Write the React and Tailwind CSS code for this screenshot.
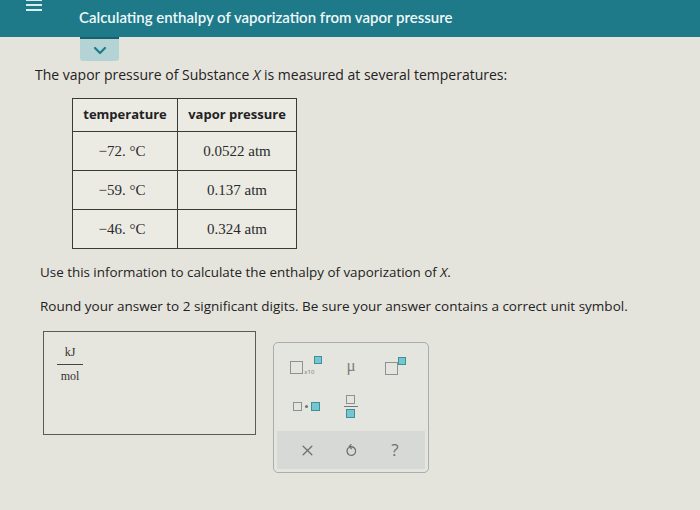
import React from "react";

const sans = { fontFamily: '"Open Sans", "DejaVu Sans", sans-serif' };
const serif = { fontFamily: '"Liberation Serif", "Times New Roman", serif' };

function TealBox({ className = "" }) {
  return <span className={"inline-block border border-[#3f8f9a] bg-[#74c7cf] " + className} />;
}
function GrayBox({ className = "" }) {
  return <span className={"inline-block border border-[#8c9292] bg-transparent " + className} />;
}

export default function App() {
  const rows = [
    ["\u221272. \u00b0C", "0.0522 atm"],
    ["\u221259. \u00b0C", "0.137 atm"],
    ["\u221246. \u00b0C", "0.324 atm"],
  ];
  return (
    <div className="w-[700px] h-[510px] overflow-hidden bg-[#e5e4dc] text-[#222]" style={sans}>
      {/* header */}
      <div className="h-[37px] bg-[#1e7a89] flex items-start relative">
        <div className="ml-[26px] mt-[-1px] flex flex-col gap-[3px] w-[16px]">
          <span className="block h-[2px] bg-[#d9eef0]" />
          <span className="block h-[2px] bg-[#d9eef0]" />
          <span className="block h-[2px] bg-[#d9eef0]" />
        </div>
        <div className="ml-[37px] mt-[6px] text-[15px] font-semibold text-[#eef8f9]" style={{ fontFamily: 'Lato, "Open Sans", sans-serif' }}>
          Calculating enthalpy of vaporization from vapor pressure
        </div>
      </div>
      {/* tab */}
      <div className="ml-[80px] w-[39px] h-[24px] bg-[#b4d3d4] border-t-[2px] border-[#18606b] rounded-b-[3px] flex items-center justify-center">
        <svg width="14" height="9" viewBox="0 0 14 9">
          <path d="M2 2 L7 7 L12 2" fill="none" stroke="#1f7c8b" strokeWidth="2.2" strokeLinecap="round" strokeLinejoin="round" />
        </svg>
      </div>
      <p className="ml-[35px] mt-[4px] text-[14px] leading-[19px] text-[#222]">
        The vapor pressure of Substance <i>X</i> is measured at several temperatures:
      </p>
      {/* table */}
      <table className="ml-[72px] mt-[14px] border-collapse border-[1.5px] border-[#3a3a3a] bg-[#ebebe4]">
        <thead>
          <tr className="h-[33px]">
            <th className="w-[105px] border border-[#3a3a3a] text-[13px] font-bold text-[#222] px-1">temperature</th>
            <th className="w-[119px] border border-[#3a3a3a] text-[13px] font-bold text-[#222] px-1">vapor pressure</th>
          </tr>
        </thead>
        <tbody>
          {rows.map((r, i) => (
            <tr key={i} className="h-[39px]">
              <td className="border border-[#3a3a3a] text-center text-[15px] text-[#2a2a2a] pr-[6px]" style={serif}>{r[0]}</td>
              <td className="border border-[#3a3a3a] text-center text-[15px] text-[#2a2a2a]" style={serif}>{r[1]}</td>
            </tr>
          ))}
        </tbody>
      </table>
      <p className="ml-[40px] mt-[14px] text-[13.4px] leading-[18px]">
        Use this information to calculate the enthalpy of vaporization of <i>X</i>.
      </p>
      <p className="ml-[40px] mt-[16px] text-[13.5px] leading-[18px]">
        Round your answer to 2 significant digits. Be sure your answer contains a correct unit symbol.
      </p>
      {/* answer area */}
      <div className="flex items-start mt-[16px]">
        <div className="ml-[43px] w-[213px] h-[104px] border border-[#5a5a5a] bg-[#e7e6de] pl-[13px] pt-[6px]">
          <div className="inline-flex flex-col items-center text-[12px] text-[#333] leading-[13px]" style={serif}>
            <span className="px-[2px]">kJ</span>
            <span className="block w-[26px] h-px bg-[#444] my-[5px]" />
            <span>mol</span>
          </div>
        </div>
        <div className="ml-[17px] mt-[11px] w-[156px] h-[131px] border border-[#a9adab] rounded-[5px] bg-[#e4e5de] flex flex-col overflow-hidden">
          <div className="grid grid-cols-3 h-[42px] items-center px-[10px] pt-[4px]">
            <div className="flex items-start justify-center">
              <GrayBox className="w-[13px] h-[13px] mt-[5px]" />
              <span className="text-[6px] text-[#777] mt-[12px] ml-[1px]">x10</span>
              <TealBox className="w-[8px] h-[8px]" />
            </div>
            <div className="flex justify-center text-[17px] text-[#7c8080]" style={serif}>μ</div>
            <div className="flex items-start justify-center">
              <GrayBox className="w-[13px] h-[13px] mt-[5px]" />
              <TealBox className="w-[8px] h-[8px]" />
            </div>
          </div>
          <div className="grid grid-cols-3 h-[42px] items-center px-[10px]">
            <div className="flex items-center justify-center gap-[3px]">
              <GrayBox className="w-[9px] h-[9px]" />
              <span className="w-[3px] h-[3px] rounded-full bg-[#6e7474]" />
              <TealBox className="w-[9px] h-[9px]" />
            </div>
            <div className="flex flex-col items-center justify-center">
              <GrayBox className="w-[9px] h-[9px]" />
              <span className="block w-[14px] h-px bg-[#777] my-[2px]" />
              <TealBox className="w-[9px] h-[9px]" />
            </div>
            <div />
          </div>
          <div className="mt-auto mx-[3px] mb-[3px] h-[38px] bg-[#d6d9d5] grid grid-cols-3 items-center px-[8px] text-[#6b7474]">
            <div className="flex justify-center">
              <svg width="13" height="13" viewBox="0 0 12 12">
                <path d="M2 2 L10 10 M10 2 L2 10" stroke="#6b7474" strokeWidth="1.2" strokeLinecap="round" />
              </svg>
            </div>
            <div className="flex justify-center">
              <svg width="13" height="14" viewBox="0 0 12 13">
                <path d="M3.2 4.5 A4 4 0 1 0 6 3.5 L4.5 3.5" fill="none" stroke="#6b7474" strokeWidth="1.2" strokeLinecap="round" />
                <path d="M5.5 1.5 L3.8 3.5 L5.8 5.2" fill="none" stroke="#6b7474" strokeWidth="1.2" strokeLinecap="round" strokeLinejoin="round" />
              </svg>
            </div>
            <div className="flex justify-center text-[17px] text-[#6b7474]" style={sans}>?</div>
          </div>
        </div>
      </div>
    </div>
  );
}
